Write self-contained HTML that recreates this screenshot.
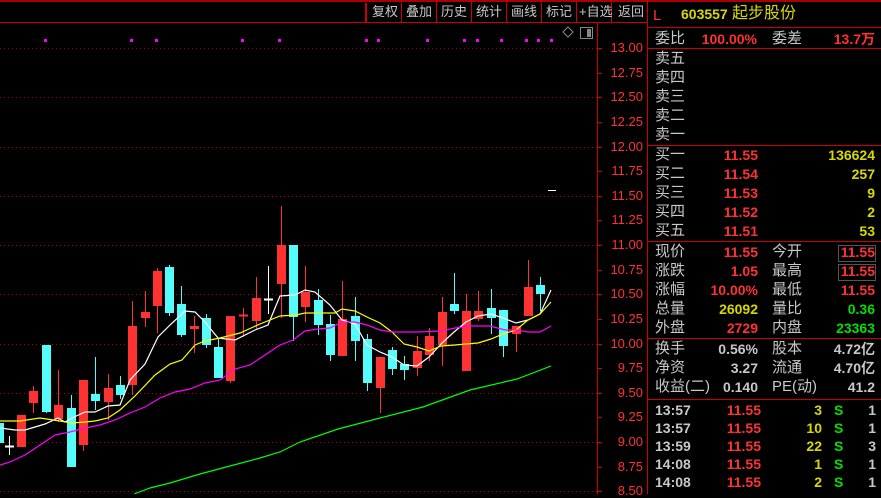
<!DOCTYPE html>
<html><head><meta charset="utf-8"><style>
body{margin:0;background:#000;width:881px;height:494px;overflow:hidden;font-family:"Liberation Sans","Noto Sans CJK SC",sans-serif;}
#w{position:relative;width:881px;height:494px;}
.t{position:absolute;white-space:nowrap;line-height:1;}
.lb{color:#c8c8c8;font-size:15px;}
.n{font-weight:bold;font-size:14px;}
.r{color:#ff3232}.y{color:#d8d800}.g{color:#00e000}.wt{color:#c8c8c8}
</style></head><body><div id="w">
<svg width="881" height="494" style="position:absolute;left:0;top:0" id="s">
<rect x="0" y="0" width="881" height="2" fill="#a00"/>
<line x1="0" y1="22.5" x2="647" y2="22.5" stroke="#c00"/>
<line x1="647.5" y1="0" x2="647.5" y2="494" stroke="#c00"/>
<line x1="597.5" y1="22" x2="597.5" y2="494" stroke="#c00"/>
<rect x="365" y="3" width="2" height="19" fill="#c00"/>
<g stroke="#c00"><line x1="401.5" y1="2" x2="401.5" y2="22"/><line x1="436.5" y1="2" x2="436.5" y2="22"/><line x1="471.5" y1="2" x2="471.5" y2="22"/><line x1="506.5" y1="2" x2="506.5" y2="22"/><line x1="541.5" y1="2" x2="541.5" y2="22"/><line x1="576.5" y1="2" x2="576.5" y2="22"/><line x1="611.5" y1="2" x2="611.5" y2="22"/></g>
<g stroke="#c00"><line x1="647" y1="27.5" x2="881" y2="27.5"/><line x1="647" y1="48.5" x2="881" y2="48.5"/><line x1="647" y1="145.5" x2="881" y2="145.5"/><line x1="647" y1="241.5" x2="881" y2="241.5"/><line x1="647" y1="338.5" x2="881" y2="338.5"/><line x1="647" y1="399.5" x2="881" y2="399.5"/></g>
<rect x="838.5" y="245.5" width="37" height="16" fill="none" stroke="#555"/>
<rect x="838.5" y="264.5" width="37" height="16" fill="none" stroke="#555"/>
<path d="M568 27 L573 32 L568 37 L563 32 Z" fill="none" stroke="#888"/>
<rect x="580.5" y="27.5" width="12" height="11" fill="none" stroke="#888"/><rect x="587" y="29" width="4" height="8" fill="#888"/>
<line x1="548" y1="190.5" x2="556" y2="190.5" stroke="#fff"/>
<g id="grid"></g><g id="c"></g>
</svg>
<div class="t wt" style="left:372px;top:5px;font-size:13px">复权</div>
<div class="t wt" style="left:406px;top:5px;font-size:13px">叠加</div>
<div class="t wt" style="left:441px;top:5px;font-size:13px">历史</div>
<div class="t wt" style="left:476px;top:5px;font-size:13px">统计</div>
<div class="t wt" style="left:511px;top:5px;font-size:13px">画线</div>
<div class="t wt" style="left:546px;top:5px;font-size:13px">标记</div>
<div class="t wt" style="left:579px;top:5px;font-size:13px">+自选</div>
<div class="t wt" style="left:618px;top:5px;font-size:13px">返回</div>
<div id="ax"></div>
<div class="t r" style="left:653px;top:8px;font-size:15px">L</div>
<div class="t y" style="left:681px;top:7px;font-size:14px;font-weight:bold">603557</div>
<div class="t y" style="left:732px;top:6px;font-size:16px">起步股份</div>
<div id="p"></div>
</div>
<script>
var NS="http://www.w3.org/2000/svg";
function el(g,t,a){var e=document.createElementNS(NS,t);for(var k in a)e.setAttribute(k,a[k]);g.appendChild(e);return e;}
function Y(p){return 48+(13-p)*98.5;}
var gr=document.getElementById('grid'),ax=document.getElementById('ax');
for(var p=13;p>=8.5;p-=0.25){var y=Math.round(Y(p));
 if(Math.abs(p*2-Math.round(p*2))<1e-6) el(gr,'line',{x1:0,x2:597,y1:y+.5,y2:y+.5,stroke:'#a00','stroke-dasharray':'1 3'});
 el(gr,'line',{x1:598,x2:602,y1:y+.5,y2:y+.5,stroke:'#c00'});
 var d=document.createElement('div');d.className='t r';d.style.cssText='right:238px;top:'+(y-7)+'px;font-size:13px';d.textContent=p.toFixed(2);ax.appendChild(d);}
var cg=document.getElementById('c');
[45,131,156,242,279,366,378,427,464,477,501,526,538,551].forEach(function(x){el(cg,'rect',{x:x-1,y:39,width:3,height:3,fill:'#f0f'});});
var C=[[-1,'c',423,443,423,443],[9,'w',446,447,436,455],[21,'r',415,447,415,447],[33,'r',391,403,386,413],[46,'c',345,412,345,413],[58,'r',405,419,370,422],[71,'c',408,467,395,467],[83,'r',380,445,380,451],[95,'c',394,401,357,410],[108,'r',388,402,374,420],[120,'c',385,395,376,399],[132,'r',326,385,301,395],[145,'r',312,318,291,327],[157,'r',271,306,268,333],[169,'c',267,313,265,316],[181,'c',304,335,286,337],[194,'r',326,329,316,353],[206,'c',318,345,314,348],[218,'c',347,378,338,378],[230,'r',316,381,316,383],[243,'r',315,316,308,337],[256,'r',298,321,277,330],[268,'w',299,300,266,314],[281,'r',245,284,206,318],[293,'c',245,317,245,341],[305,'r',292,307,266,322],[318,'c',300,325,289,335],[330,'c',324,355,315,361],[342,'r',319,356,281,356],[355,'c',316,341,297,361],[367,'c',339,383,334,391],[380,'r',357,388,357,413],[392,'c',350,369,347,375],[404,'c',364,370,356,380],[417,'r',351,368,336,376],[429,'r',336,355,328,361],[442,'r',312,345,297,366],[454,'c',304,311,273,314],[466,'r',311,371,294,371],[478,'r',311,319,291,321],[491,'c',308,318,289,334],[503,'c',310,346,310,357],[516,'r',326,334,326,352],[528,'r',287,316,260,316],[540,'c',285,294,277,311]];
var col={r:'#ff3232',c:'#54fcfc',w:'#ffffff'};
C.forEach(function(k){var x=k[0],c=col[k[1]];
 el(cg,'line',{x1:x+.5,x2:x+.5,y1:k[4],y2:k[5],stroke:c});
 if(k[3]-k[2]<=2) el(cg,'line',{x1:x-4,x2:x+5,y1:k[2]+.5,y2:k[2]+.5,stroke:c,'stroke-width':2});
 else el(cg,'rect',{x:x-4,y:k[2],width:9,height:k[3]-k[2],fill:c});});
function pl(pts,c){el(cg,'polyline',{points:pts,fill:'none',stroke:c,'stroke-width':1.2});}
pl("0,428 15,430 25,430 45,424 58,418 65,422 72,418 85,412 95,412 108,406 120,405 130,380 145,364 158,337 170,325 185,311 195,312 205,322 218,338 235,340 255,330 268,325 280,296 295,295 305,290 315,292 330,305 342,320 355,324 367,345 380,352 392,357 404,365 417,366 429,357 442,343 454,332 466,322 478,316 491,314 503,318 516,323 528,320 540,314 551,290",'#fff');
pl("0,421 20,421 40,418 60,421 72,423 85,422 95,421 108,418 120,410 135,396 155,375 170,364 182,360 195,345 205,341 220,338 240,333 260,324 280,316 296,315 305,313 320,313 335,313 342,309 355,311 367,317 380,323 392,332 404,344 417,347 429,351 441,346 455,345 466,344 478,343 491,339 503,334 516,330 528,320 540,314 551,302",'#ff0');
pl("0,465 10,462 25,455 40,445 55,435 70,432 85,428 100,425 115,420 130,413 145,407 160,398 175,392 190,389 205,383 220,380 235,369 250,365 265,355 280,345 293,340 305,331 318,329 330,328 342,322 355,322 367,325 380,330 392,332 404,332 417,332 441,331 455,328 470,326 490,326 505,330 516,330 528,332 540,332 551,326",'#f0f');
pl("134,494 150,488 170,483 200,474 230,466 260,458 280,452 300,442 338,429 380,418 423,407 470,390 517,379 551,366",'#0f0');
var P=document.getElementById('p');
function T(x,y,s,cls,right){var d=document.createElement('div');d.className='t '+cls;d.textContent=s;d.style.top=y+'px';if(right)d.style.right=(881-x)+'px';else d.style.left=x+'px';P.appendChild(d);}
T(655,31,'委比','lb');T(757,32,'100.00%','n r',1);T(772,31,'委差','lb');T(875,32,'13.7万','n r',1);
['卖五','卖四','卖三','卖二','卖一'].forEach(function(s,i){T(655,51+i*19,s,'lb');});
[['买一','11.55','136624'],['买二','11.54','257'],['买三','11.53','9'],['买四','11.52','2'],['买五','11.51','53']].forEach(function(r,i){var y=148+i*19;T(655,y-1,r[0],'lb');T(758,y,r[1],'n r',1);T(875,y,r[2],'n y',1);});
[['现价','11.55','r','今开','11.55','r'],['涨跌','1.05','r','最高','11.55','r'],['涨幅','10.00%','r','最低','11.55','r'],['总量','26092','y','量比','0.36','g'],['外盘','2729','r','内盘','23363','g']].forEach(function(r,i){var y=245+i*19;T(655,y-1,r[0],'lb');T(758,y,r[1],'n '+r[2],1);T(772,y-1,r[3],'lb');T(875,y,r[4],'n '+r[5],1);});
[['换手','0.56%','股本','4.72亿'],['净资','3.27','流通','4.70亿'],['收益(二)','0.140','PE(动)','41.2']].forEach(function(r,i){var y=342+i*19;T(655,y-1,r[0],'lb');T(758,y,r[1],'n wt',1);T(772,y-1,r[2],'lb');T(875,y,r[3],'n wt',1);});
[['13:57','3','1'],['13:57','10','1'],['13:59','22','3'],['14:08','1','1'],['14:08','2','1']].forEach(function(r,i){var y=403+i*18;T(655,y,r[0],'n wt');T(761,y,'11.55','n r',1);T(822,y,r[1],'n y',1);T(834,y,'S','n g');T(876,y,r[2],'n wt',1);});
</script>
</body></html>
